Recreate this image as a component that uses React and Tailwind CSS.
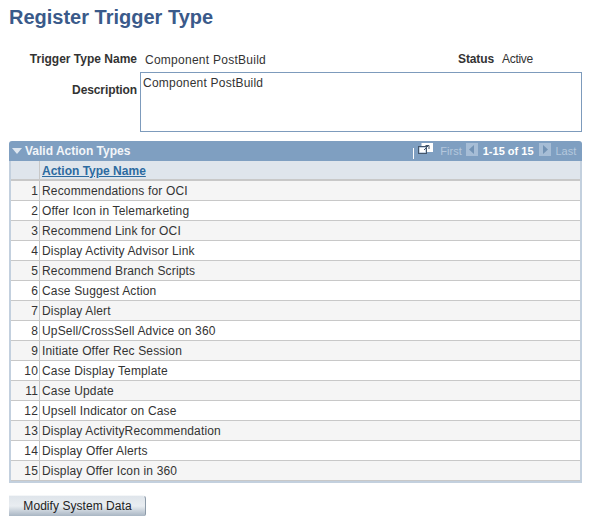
const rows = [
  'Recommendations for OCI',
  'Offer Icon in Telemarketing',
  'Recommend Link for OCI',
  'Display Activity Advisor Link',
  'Recommend Branch Scripts',
  'Case Suggest Action',
  'Display Alert',
  'UpSell/CrossSell Advice on 360',
  'Initiate Offer Rec Session',
  'Case Display Template',
  'Case Update',
  'Upsell Indicator on Case',
  'Display ActivityRecommendation',
  'Display Offer Alerts',
  'Display Offer Icon in 360',
]

function NavArrow({ right }) {
  return (
    <span className="mb-[4px] flex h-[13px] w-[12px] items-center justify-center bg-[#a6bdd6]">
      <svg width="6" height="9" viewBox="0 0 6 9" aria-hidden="true">
        <path d={right ? 'M1 0l5 4.5L1 9z' : 'M5 0L0 4.5 5 9z'} fill="#7393b5" />
      </svg>
    </span>
  )
}

export default function App() {
  return (
    <div className="h-[524px] w-[593px] overflow-hidden bg-white font-['Liberation_Sans',Arial,sans-serif] text-[12px] tracking-[0.16px] text-[#333]">
      <h1 className="pt-[4px] pl-[9px] text-[20px] leading-[26px] font-bold tracking-normal text-[#3a5a8a]">
        Register Trigger Type
      </h1>

      <div className="mt-[22px] flex h-[14px] items-center">
        <span className="w-[137px] text-right leading-[14px] font-bold tracking-normal">Trigger Type Name</span>
        <span className="mt-[1px] ml-[8px] w-[313px] leading-[14px] tracking-[0.26px]">Component PostBuild</span>
        <span className="w-[36px] text-right leading-[14px] font-bold tracking-[-0.1px]">Status</span>
        <span className="ml-[8px] leading-[14px] tracking-[-0.3px]">Active</span>
      </div>

      <div className="mt-[6px] flex items-start">
        <span className="mt-[11px] w-[137px] text-right leading-[14px] font-bold tracking-[-0.1px]">Description</span>
        <div className="ml-[3px] h-[60px] w-[442px] border border-[#7d9bbc] px-[2px] pt-[3px] leading-[14px] tracking-[0.22px]">
          Component PostBuild
        </div>
      </div>

      <div className="mt-[9px] ml-[9px] w-[573px]">
        <div className="flex h-[20px] items-center rounded-t-[3px] bg-[#7f9fc1] pl-[3px] text-white">
          <svg width="10" height="6" viewBox="0 0 10 6" aria-hidden="true">
            <path d="M0 0h10L5 6z" fill="#dfe7f0" />
          </svg>
          <span className="ml-[3px] font-bold tracking-normal text-[#f2f5f9]">Valid Action Types</span>
          <span className="mt-[4px] ml-[283px] h-[11px] w-[1px] bg-white" />
          <svg className="mb-[5px] ml-[4px]" width="15" height="11" viewBox="0 0 15 11" aria-hidden="true">
            <rect x="3.5" y="0" width="11.5" height="9" fill="#fff" />
            <rect x="0.5" y="3.5" width="8" height="7" fill="#8fa9c6" stroke="#44566b" />
            <rect x="1.5" y="4.5" width="6" height="5" fill="#fff" />
            <path d="M6 7l4-4M7.5 2.5H11V6" fill="none" stroke="#44566b" />
          </svg>
          <span className="ml-[7px] text-[11px] tracking-normal text-[#b5c8dd]">First</span>
          <span className="ml-[4px]"><NavArrow /></span>
          <span className="ml-[5px] text-[11px] font-bold tracking-normal text-white">1-15 of 15</span>
          <span className="ml-[5px]"><NavArrow right /></span>
          <span className="ml-[5px] text-[11px] tracking-normal text-[#b5c8dd]">Last</span>
        </div>

        <div className="border-r-2 border-b-2 border-l-2 border-[#c3d0de]">
          <div className="flex h-[20px] border-b-2 border-[#c8c8c8] bg-[#dfe5ec]">
            <div className="w-[29px] border-r border-[#c8c8c8]" />
            <a className="pt-[1px] pl-[2px] font-bold tracking-normal text-[#2c6aa0] underline">Action Type Name</a>
          </div>
          {rows.map((name, i) => (
            <div
              key={name}
              className={`flex h-[20px] border-b border-[#c8c8c8] leading-[20px] ${i % 2 ? 'bg-white' : 'bg-[#f5f5f5]'}`}
            >
              <div className="w-[29px] border-r border-[#c8c8c8] pr-[1px] text-right">{i + 1}</div>
              <div className="pl-[2px]">{name}</div>
            </div>
          ))}
        </div>
      </div>

      <button
        type="button"
        className="mt-[12px] ml-[9px] h-[21px] w-[137px] rounded-tr-[4px] rounded-br-[2px] border-t border-r border-t-[#f4f6f8] border-r-[#8c9aa8] bg-gradient-to-b from-[#dfe5eb] via-[#e9edf1] to-[#a9b6c4] pl-[1px] text-[12px] tracking-[0.05px] text-[#222]"
      >
        Modify System Data
      </button>
    </div>
  )
}
